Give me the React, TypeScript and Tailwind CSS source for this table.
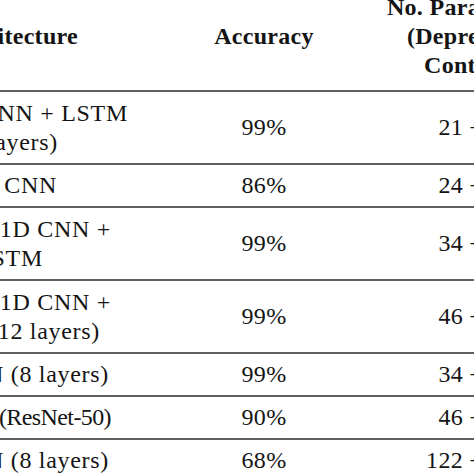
const rows = [
  { arch: [["1D CNN + LSTM", 128], ["(8 layers)", 58]], acc: "99%", params: "21", rest: "+ 15", tall: true },
  { arch: [["2D CNN", 57]], acc: "86%", params: "24", rest: "+ 12", tall: false },
  { arch: [["Dual 1D CNN +", 111], ["BiLSTM", 43]], acc: "99%", params: "34", rest: "+ 18", tall: true },
  { arch: [["Dual 1D CNN +", 111], ["LSTM (12 layers)", 100]], acc: "99%", params: "46", rest: "+ 20", tall: true },
  { arch: [["1D CNN (8 layers)", 109]], acc: "99%", params: "34", rest: "+ 16", tall: false },
  { arch: [["2D CNN (ResNet-50)", 111]], acc: "90%", params: "46", rest: "+ 21", tall: false, tight: true },
  { arch: [["2D CNN (8 layers)", 109]], acc: "68%", params: "122", rest: "+ 40", tall: false },
];

// right edge of each clipped line, so the visible tail lands where it should
const tailWidth: Record<number, string> = {
  128: "w-[128px]",
  58: "w-[58px]",
  57: "w-[57px]",
  111: "w-[111px]",
  43: "w-[43px]",
  100: "w-[100px]",
  109: "w-[109px]",
};

const Rule = () => <div className="h-[2px] bg-[#5f5f5f]" />;

export default function App() {
  return (
    <div className="w-[474px] h-[474px] overflow-hidden bg-white font-['Liberation_Serif',serif] text-[24px] leading-[29px] text-[#141414] tracking-[0.3px]">
      <div className="w-[600px]">
        <div className="h-[90px] flex items-end pb-[10px]">
          <div className="grid grid-cols-[190px_148px_262px] items-center font-bold">
            <div className="flex justify-end w-[78px]">
              <span className="whitespace-nowrap">Architecture</span>
            </div>
            <div className="text-center">Accuracy</div>
            <div className="text-center whitespace-nowrap">
              No. Parameters
              <br />
              (Depression
              <br />
              Control)
            </div>
          </div>
        </div>
        <Rule />

        {rows.map((r, i) => (
          <div key={i}>
            <div
              className={`grid grid-cols-[190px_148px_262px] items-center ${
                r.tall ? "h-[71px]" : "h-[41px]"
              }`}
            >
              <div className={`flex flex-col ${r.tight ? "tracking-[-0.6px]" : "tracking-[0.7px]"}`}>
                {r.arch.map(([text, right]) => (
                  <div key={text as string} className={`flex justify-end ${tailWidth[right as number]}`}>
                    <span className="whitespace-nowrap">{text}</span>
                  </div>
                ))}
              </div>
              <div className="text-center">{r.acc}</div>
              <div className="flex whitespace-nowrap">
                <span className="w-[125px] text-right">{r.params}</span>
                <span>&nbsp;{r.rest}</span>
              </div>
            </div>
            {i < rows.length - 1 && <Rule />}
          </div>
        ))}
      </div>
    </div>
  );
}
